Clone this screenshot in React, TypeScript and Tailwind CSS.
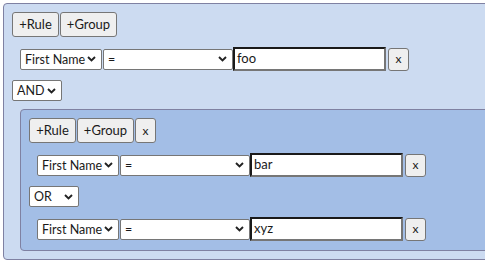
import React from "react";

const font = { fontFamily: 'Lato, "Noto Sans", sans-serif' };

function Chevron() {
  return (
    <svg width="9" height="6" viewBox="0 0 9 6" className="absolute right-[5px] top-1/2 -translate-y-1/2">
      <path d="M1 1 L4.5 4.5 L8 1" fill="none" stroke="#222" strokeWidth="1.9" />
    </svg>
  );
}

function Select({ value, w }: { value: string; w: string }) {
  return (
    <div className={`relative h-[21px] ${w} shrink-0 rounded-[2px] border border-[#767676] bg-white text-[12.5px] leading-[19px] text-[#1a1a1a] pl-[4px]`}>
      {value}
      <Chevron />
    </div>
  );
}

function Btn({ children, w }: { children: React.ReactNode; w: string }) {
  return (
    <div className={`flex h-[25px] ${w} shrink-0 items-center justify-center rounded-[3px] border border-[#767676] bg-[#efefef] text-[13px] text-[#1a1a1a]`}>
      {children}
    </div>
  );
}

function XBtn() {
  return (
    <div className="flex h-[23px] w-[21px] shrink-0 items-center justify-center rounded-[3px] border border-[#767676] bg-[#efefef] text-[12px] leading-none text-[#1a1a1a]">
      x
    </div>
  );
}

function Rule({ value }: { value: string }) {
  return (
    <div className="ml-[8px] flex h-[24px] items-center">
      <Select value="First Name" w="w-[82px]" />
      <div className="w-[1px]" />
      <Select value="=" w="w-[130px]" />
      <div className="h-[24px] w-[153px] shrink-0 border-2 border-t-[#1a1a1a] border-l-[#1a1a1a] border-b-[#767676] border-r-[#767676] bg-white pl-[2px] text-[13px] leading-[19px] text-[#1a1a1a]">
        {value}
      </div>
      <div className="w-[2px]" />
      <XBtn />
    </div>
  );
}

export default function App() {
  return (
    <div className="h-[263px] w-[485px] overflow-hidden bg-white" style={font}>
      <div className="ml-[3px] mt-[3px] flex w-[520px] flex-col gap-[10px] rounded-[4px] border border-[#7f81a2] bg-[#ccdbf1] p-[8px]">
        <div className="flex gap-[1px]">
          <Btn w="w-[47px]">+Rule</Btn>
          <Btn w="w-[57px]">+Group</Btn>
        </div>
        <Rule value="foo" />
        <div className="-mt-[1px]">
          <Select value="AND" w="w-[50px]" />
        </div>
        <div className="-mt-[2px] ml-[8px] flex flex-col gap-[10px] rounded-[4px] border border-[#7f81a2] bg-[#a3bee6] p-[8px] pb-[9px]">
          <div className="flex gap-[1px]">
            <Btn w="w-[47px]">+Rule</Btn>
            <Btn w="w-[57px]">+Group</Btn>
            <Btn w="w-[21px]">
              <span className="text-[12px]">x</span>
            </Btn>
          </div>
          <Rule value="bar" />
          <div className="-mt-[1px]">
            <Select value="OR" w="w-[50px]" />
          </div>
          <Rule value="xyz" />
        </div>
      </div>
    </div>
  );
}
